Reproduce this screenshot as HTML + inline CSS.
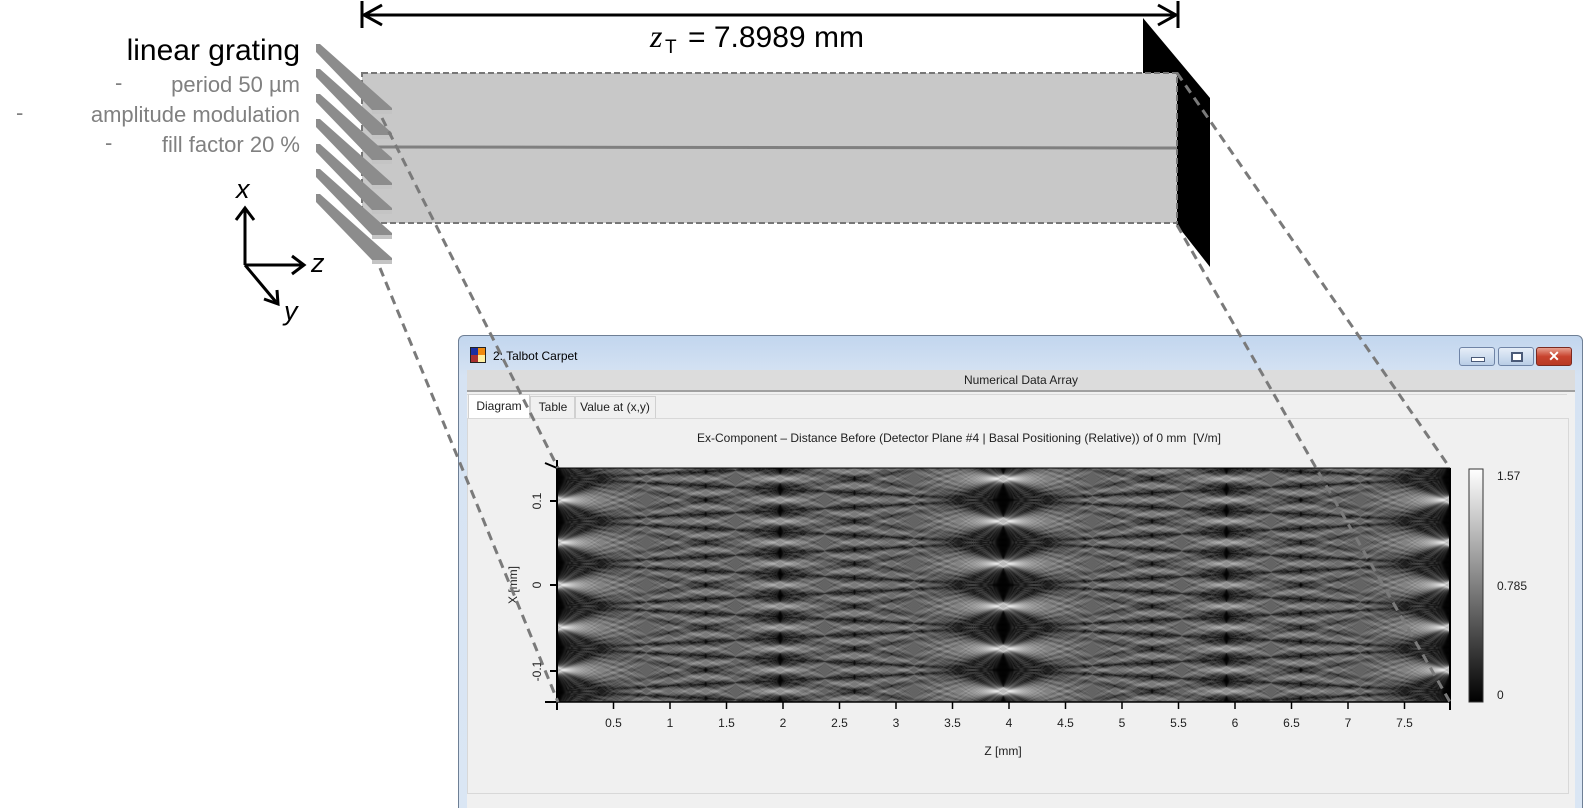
<!DOCTYPE html>
<html><head><meta charset="utf-8"><style>
html,body{margin:0;padding:0;background:#fff;width:1583px;height:808px;overflow:hidden;position:relative;font-family:"Liberation Sans",sans-serif}
.abs{position:absolute}
#win{left:458px;top:335px;width:1125px;height:480px;background:linear-gradient(#c2d6ee,#d6e3f3 40px,#dae6f4);border:1px solid #6e7f95;border-radius:6px 6px 0 0;box-sizing:border-box}
.t{font-size:12px;color:#1e1e1e;white-space:nowrap}
</style></head><body>
<svg class="abs" style="left:0;top:0" width="1583" height="808">
  <g stroke="#000" stroke-width="3" fill="none">
    <line x1="362" y1="15" x2="1178" y2="15"/>
    <line x1="362" y1="1" x2="362" y2="28"/>
    <line x1="1178" y1="1" x2="1178" y2="28"/>
    <polyline points="382,5 364,15 382,25"/>
    <polyline points="1158,5 1176,15 1158,25"/>
  </g>
  <text x="650" y="47" font-family="Liberation Serif" font-style="italic" font-size="32">z</text>
  <text x="665" y="53" font-family="Liberation Sans" font-size="19">T</text>
  <text x="688" y="47" font-family="Liberation Sans" font-size="30">= 7.8989 mm</text>
  <polygon points="1143,18 1210,98 1210,267 1177,225 1143,180" fill="#000"/>
  <rect x="362" y="73" width="815" height="150" fill="#c8c8c8" stroke="#777" stroke-width="2" stroke-dasharray="6,3"/>
  <line x1="362" y1="147" x2="1177" y2="148" stroke="#808080" stroke-width="3"/>
  <g>
    <g id="s"><polygon points="316,44 320,44 392,108 392,110 372,110 316,52" fill="#8c8c8c"/><rect x="372" y="110" width="20" height="4" fill="#c4c4c4"/></g>
    <use href="#s" y="25"/><use href="#s" y="50"/><use href="#s" y="75"/><use href="#s" y="100"/><use href="#s" y="125"/><use href="#s" y="150"/>
  </g>
  <text x="300" y="60" text-anchor="end" font-size="30" fill="#000">linear grating</text>
  <g font-size="22" fill="#808080">
    <text x="300" y="92" text-anchor="end">period 50 µm</text>
    <text x="300" y="122" text-anchor="end">amplitude modulation</text>
    <text x="300" y="152" text-anchor="end">fill factor 20 %</text>
    <text x="115" y="90">-</text><text x="16" y="120">-</text><text x="105" y="150">-</text>
  </g>
  <g stroke="#000" stroke-width="3" fill="none">
    <line x1="245" y1="265" x2="245" y2="210"/><polyline points="236,220 245,208 254,220"/>
    <line x1="245" y1="265" x2="302" y2="265"/><polyline points="292,256 304,265 292,274"/>
    <line x1="245" y1="265" x2="276" y2="302"/><polyline points="264,299 278,304 277,290"/>
  </g>
  <g font-size="27" font-style="italic" fill="#000">
    <text x="236" y="198">x</text><text x="311" y="272">z</text><text x="284" y="320">y</text>
  </g>
</svg>

<div id="win" class="abs">
  <div class="abs" style="left:11px;top:11px;width:16px;height:16px;background:#222">
    <div class="abs" style="left:1px;top:1px;width:7px;height:7px;background:#1b2fa0"></div>
    <div class="abs" style="left:8px;top:1px;width:7px;height:7px;background:#f08a10"></div>
    <div class="abs" style="left:1px;top:8px;width:7px;height:7px;background:#a83030"></div>
    <div class="abs" style="left:8px;top:8px;width:7px;height:7px;background:#fff0a0"></div>
  </div>
  <div class="abs" style="left:34px;top:13px;font-size:12px;color:#000">2: Talbot Carpet</div>
  <div class="abs" style="left:1000px;top:11px;width:36px;height:19px;border:1px solid #6f84a6;border-radius:3px;box-sizing:border-box;background:linear-gradient(#e6eef8,#b9cde6)"><div class="abs" style="left:11px;top:9px;width:12px;height:3px;background:#fff;border:1px solid #4a5a78"></div></div>
  <div class="abs" style="left:1039px;top:11px;width:36px;height:19px;border:1px solid #6f84a6;border-radius:3px;box-sizing:border-box;background:linear-gradient(#e6eef8,#b9cde6)"><div class="abs" style="left:12px;top:4px;width:8px;height:6px;border:2px solid #4a5a78;background:#fff"></div></div>
  <div class="abs" style="left:1077px;top:11px;width:36px;height:19px;border:1px solid #7a2a20;border-radius:3px;box-sizing:border-box;background:linear-gradient(#e8a090,#c8432e 50%,#b83a25);color:#fff;font-weight:bold;font-size:14px;text-align:center;line-height:17px">✕</div>
  <div class="abs" style="left:8px;top:34px;width:1108px;height:450px;background:#f0f0f0">
    <div class="abs" style="left:0;top:0;width:1108px;height:20px;background:#dcdcdc;border-bottom:2px solid #a0a0a0"></div>
    <div class="abs t" style="left:0;top:3px;width:1108px;text-align:center">Numerical Data Array</div>
    <div class="abs" style="left:0;top:24px;width:1100px;height:1px;background:#d8d8d8"></div>
    <div class="abs t" style="left:1px;top:24px;width:60px;height:24px;background:#fff;border:1px solid #d0d0d0;border-bottom:none;line-height:22px;text-align:center">Diagram</div>
    <div class="abs t" style="left:63px;top:26px;width:44px;height:21px;border:1px solid #d0d0d0;line-height:20px;text-align:center">Table</div>
    <div class="abs t" style="left:107px;top:26px;width:80px;height:21px;border:1px solid #d0d0d0;line-height:20px;text-align:center">Value at (x,y)</div>
    <div class="abs" style="left:0;top:48px;width:1100px;height:374px;border:1px solid #d8d8d8;background:#f0f0f0"></div>
  </div>
</div>

<div class="abs t" style="left:697px;top:431px">Ex-Component – Distance Before (Detector Plane #4 | Basal Positioning (Relative)) of 0 mm&nbsp; [V/m]</div>
<canvas id="c" class="abs" width="893" height="234" style="left:557px;top:468px;background:#2a2a2a"></canvas>
<svg class="abs" style="left:0;top:0" width="1583" height="808">
  <g stroke="#000" stroke-width="2" fill="none">
    <line x1="557" y1="468" x2="1450" y2="468" stroke-width="1"/>
    <line x1="1450" y1="468" x2="1450" y2="710" />
    <line x1="557" y1="460" x2="557" y2="710"/>
    <line x1="557" y1="702" x2="1450" y2="702" stroke-width="1.5"/>
    <line x1="545" y1="463" x2="557" y2="468"/><line x1="545" y1="702" x2="557" y2="702"/>
    <line x1="550" y1="501" x2="557" y2="501"/><line x1="550" y1="585" x2="557" y2="585"/><line x1="550" y1="671" x2="557" y2="671"/>
  </g>
  <g stroke="#000" stroke-width="1.5" id="xt"></g>
  <g font-size="12" fill="#1e1e1e" font-family="Liberation Sans" id="xl"></g>
  <g font-size="12" fill="#1e1e1e" font-family="Liberation Sans">
    <text transform="translate(541,501) rotate(-90)" text-anchor="middle">0.1</text>
    <text transform="translate(541,585) rotate(-90)" text-anchor="middle">0</text>
    <text transform="translate(541,671) rotate(-90)" text-anchor="middle">-0.1</text>
    <text transform="translate(517,585) rotate(-90)" text-anchor="middle">X [mm]</text>
    <text x="1003" y="755" text-anchor="middle">Z [mm]</text>
    <text x="1497" y="480">1.57</text>
    <text x="1497" y="590">0.785</text>
    <text x="1497" y="699">0</text>
  </g>
  <defs><linearGradient id="cb" x1="0" y1="0" x2="0" y2="1"><stop offset="0" stop-color="#fff"/><stop offset="1" stop-color="#000"/></linearGradient></defs>
  <rect x="1469" y="469" width="14" height="233" fill="url(#cb)" stroke="#333" stroke-width="1"/>
  <g stroke="#7a7a7a" stroke-width="3" stroke-dasharray="9,6" fill="none">
    <line x1="382" y1="118" x2="558" y2="468"/>
    <line x1="380" y1="268" x2="558" y2="702"/>
    <line x1="1177" y1="73" x2="1450" y2="468"/>
    <line x1="1177" y1="225" x2="1450" y2="702"/>
  </g>
</svg>
<script>
(function(){
  var xt=document.getElementById('xt'),xl=document.getElementById('xl'),ns='http://www.w3.org/2000/svg';
  for(var k=1;k<=15;k++){var v=k*0.5,x=557+v*113;
    var l=document.createElementNS(ns,'line');l.setAttribute('x1',x);l.setAttribute('x2',x);l.setAttribute('y1',702);l.setAttribute('y2',709);xt.appendChild(l);
    var t=document.createElementNS(ns,'text');t.setAttribute('x',x);t.setAttribute('y',727);t.setAttribute('text-anchor','middle');t.textContent=String(v);xl.appendChild(t);}
  var c=document.getElementById('c'),g=c.getContext('2d'),W=893,H=234;
  var img=g.createImageData(W,H),d=img.data;
  var N=24,f=0.2,cn=[],ns2=[];
  for(var n=-N;n<=N;n++){cn.push(n===0?f:Math.sin(Math.PI*n*f)/(Math.PI*n));ns2.push(n);}
  var M=cn.length;
  var cu=new Float64Array(H*M),su=new Float64Array(H*M);
  for(var y=0;y<H;y++){var xmm=(117-y-0.5)/850;var u=xmm/0.05;
    for(var i=0;i<M;i++){var a=2*Math.PI*ns2[i]*u;cu[y*M+i]=Math.cos(a);su[y*M+i]=Math.sin(a);}}
  var pc=new Float64Array(M),ps=new Float64Array(M);
  for(var x=0;x<W;x++){var z=(x+0.5)/113/7.8989;
    for(var i=0;i<M;i++){var b=-2*Math.PI*ns2[i]*ns2[i]*z;pc[i]=cn[i]*Math.cos(b);ps[i]=cn[i]*Math.sin(b);}
    for(var y=0;y<H;y++){var re=0,im=0,o=y*M;
      for(var i=0;i<M;i++){var A=cu[o+i],B=su[o+i];re+=pc[i]*A-ps[i]*B;im+=pc[i]*B+ps[i]*A;}
      var v=Math.sqrt(re*re+im*im)/1.45;if(v>1)v=1;var q=(y*W+x)*4,gv=Math.round(Math.pow(v,0.8)*255);
      d[q]=d[q+1]=d[q+2]=gv;d[q+3]=255;}}
  g.putImageData(img,0,0);
})();
</script>
</body></html>
